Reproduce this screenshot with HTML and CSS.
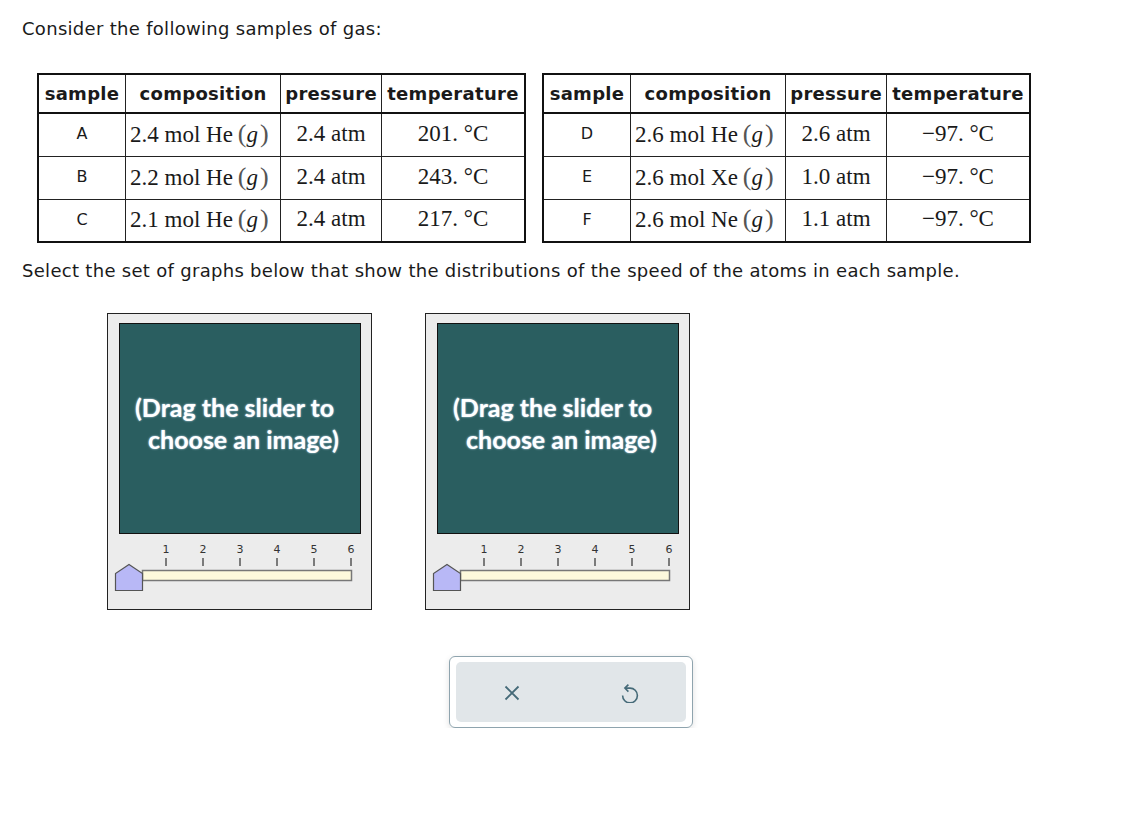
FILE: index.html
```html
<!DOCTYPE html>
<html lang="en">
<head>
    <meta charset="UTF-8">
    <title>Gas Samples</title>
    <link rel="stylesheet" href="styles.css">
</head>
<body>
    <div class="question">
        <p class="prompt">Consider the following samples of gas:</p>

        <div class="tables">
            <table class="samples">
                <tr>
                    <th class="c-sample">sample</th>
                    <th class="c-comp">composition</th>
                    <th class="c-press">pressure</th>
                    <th class="c-temp">temperature</th>
                </tr>
                <tr>
                    <td class="letter">A</td>
                    <td class="comp">2.4 mol He<span class="paren">(</span><i>g</i><span class="paren">)</span></td>
                    <td class="num">2.4 atm</td>
                    <td class="num">201. °C</td>
                </tr>
                <tr>
                    <td class="letter">B</td>
                    <td class="comp">2.2 mol He<span class="paren">(</span><i>g</i><span class="paren">)</span></td>
                    <td class="num">2.4 atm</td>
                    <td class="num">243. °C</td>
                </tr>
                <tr>
                    <td class="letter">C</td>
                    <td class="comp">2.1 mol He<span class="paren">(</span><i>g</i><span class="paren">)</span></td>
                    <td class="num">2.4 atm</td>
                    <td class="num">217. °C</td>
                </tr>
            </table>

            <table class="samples">
                <tr>
                    <th class="c-sample">sample</th>
                    <th class="c-comp">composition</th>
                    <th class="c-press">pressure</th>
                    <th class="c-temp">temperature</th>
                </tr>
                <tr>
                    <td class="letter">D</td>
                    <td class="comp">2.6 mol He<span class="paren">(</span><i>g</i><span class="paren">)</span></td>
                    <td class="num">2.6 atm</td>
                    <td class="num">−97. °C</td>
                </tr>
                <tr>
                    <td class="letter">E</td>
                    <td class="comp">2.6 mol Xe<span class="paren">(</span><i>g</i><span class="paren">)</span></td>
                    <td class="num">1.0 atm</td>
                    <td class="num">−97. °C</td>
                </tr>
                <tr>
                    <td class="letter">F</td>
                    <td class="comp">2.6 mol Ne<span class="paren">(</span><i>g</i><span class="paren">)</span></td>
                    <td class="num">1.1 atm</td>
                    <td class="num">−97. °C</td>
                </tr>
            </table>
        </div>

        <p class="prompt">Select the set of graphs below that show the distributions of the speed of the atoms in each sample.</p>

        <div class="pickers">
            <div class="picker">
                <div class="screen">
                    <span class="line">(Drag the slider to</span>
                    <span class="line indent">choose an image)</span>
                </div>
                <svg class="slider" width="264" height="70" viewBox="0 0 264 70">
                    <g class="marks">
                        <text x="58" y="19">1</text>
                        <text x="95" y="19">2</text>
                        <text x="132" y="19">3</text>
                        <text x="169" y="19">4</text>
                        <text x="206" y="19">5</text>
                        <text x="243" y="19">6</text>
                    </g>
                    <path d="M58 24v8M95 24v8M132 24v8M169 24v8M206 24v8M243 24v8" stroke="#555" stroke-width="1.5"/>
                    <rect x="34.5" y="36.5" width="209" height="10" fill="#fdf9dc" stroke="#777" stroke-width="1.5"/>
                    <path d="M7.5 56.5V39.5L21 30.5L34.5 39.5V56.5Z" fill="#b8b8f6" stroke="#555" stroke-width="1.2"/>
                </svg>
            </div>
            <div class="picker">
                <div class="screen">
                    <span class="line">(Drag the slider to</span>
                    <span class="line indent">choose an image)</span>
                </div>
                <svg class="slider" width="264" height="70" viewBox="0 0 264 70">
                    <g class="marks">
                        <text x="58" y="19">1</text>
                        <text x="95" y="19">2</text>
                        <text x="132" y="19">3</text>
                        <text x="169" y="19">4</text>
                        <text x="206" y="19">5</text>
                        <text x="243" y="19">6</text>
                    </g>
                    <path d="M58 24v8M95 24v8M132 24v8M169 24v8M206 24v8M243 24v8" stroke="#555" stroke-width="1.5"/>
                    <rect x="34.5" y="36.5" width="209" height="10" fill="#fdf9dc" stroke="#777" stroke-width="1.5"/>
                    <path d="M7.5 56.5V39.5L21 30.5L34.5 39.5V56.5Z" fill="#b8b8f6" stroke="#555" stroke-width="1.2"/>
                </svg>
            </div>
        </div>

        <div class="actions">
            <div class="actions-inner">
                <button class="icon-btn" aria-label="Clear">
                    <svg width="18" height="18" viewBox="0 0 18 18">
                        <path d="M2.5 2.5L15.5 15.5M15.5 2.5L2.5 15.5" stroke="#456a78" stroke-width="1.8" fill="none"/>
                    </svg>
                </button>
                <button class="icon-btn" aria-label="Undo">
                    <svg width="18" height="20" viewBox="0 0 18 20">
                        <path d="M1.6 12.5A7.4 7.4 0 1 0 9 5.1H4.2" stroke="#456a78" stroke-width="1.6" fill="none"/>
                        <path d="M7.4 1.6L3.9 5.1L7.4 8.6" stroke="#456a78" stroke-width="1.6" fill="none"/>
                    </svg>
                </button>
            </div>
        </div>
    </div>
</body>
</html>
```

FILE: styles.css
```css
/* Reset */
* {
    margin: 0;
    padding: 0;
    box-sizing: border-box;
}

body {
    font-family: 'DejaVu Sans', Verdana, sans-serif;
    background-color: #fff;
    color: #1a1a1a;
}

.question {
    padding: 17px 0 0 22px;
}

.prompt {
    font-size: 18px;
    letter-spacing: 0.3px;
    line-height: 24px;
}

/* Tables */
.tables {
    display: flex;
    gap: 16px;
    margin: 32px 0 0 15px;
}

.samples {
    border-collapse: collapse;
    border: 2px solid #111;
    width: 489px;
}

.samples th,
.samples td {
    border: 1px solid #222;
}

.samples th {
    font-size: 18px;
    letter-spacing: 0.3px;
    font-weight: bold;
    height: 39px;
    padding: 0 2px;
    text-align: center;
    border-bottom: 2px solid #111;
}

.samples td {
    height: 43px;
    font-family: 'Liberation Serif', 'Times New Roman', serif;
    font-size: 23px;
    text-align: center;
    padding-bottom: 2px;
}

.c-sample { width: 88px; }
.c-comp { width: 156px; }
.c-press { width: 101px; }
.c-temp { width: 144px; }

.samples td.letter {
    font-family: 'DejaVu Sans', Verdana, sans-serif;
    font-size: 16px;
}

.samples td.comp {
    text-align: left;
    padding-left: 4px;
    white-space: nowrap;
}

.paren {
    color: #555;
    font-size: 26px;
    margin-left: 5px;
}

.comp i + .paren {
    margin-left: 2px;
}

.tables + .prompt {
    margin-top: 16px;
}

/* Image pickers */
.pickers {
    display: flex;
    gap: 53px;
    margin: 30px 0 0 85px;
}

.picker {
    width: 265px;
    height: 297px;
    background: #ececec;
    border: 1px solid #222;
    padding-top: 9px;
}

.screen {
    width: 242px;
    height: 211px;
    margin-left: 11px;
    background: #2a5e60;
    border: 1px solid #111;
    display: flex;
    flex-direction: column;
    justify-content: center;
    padding: 0 0 12px 15px;
}

.screen .line {
    font-family: Lato, 'Open Sans', sans-serif;
    font-weight: bold;
    font-size: 25px;
    line-height: 32px;
    color: #fff;
    text-shadow: 0 0 2px #cfe6ff;
    white-space: nowrap;
}

.screen .indent {
    padding-left: 13px;
}

.slider {
    display: block;
}

.marks text {
    font-family: 'DejaVu Sans', Verdana, sans-serif;
    font-size: 11px;
    fill: #333;
    text-anchor: middle;
}

/* Action buttons */
.actions {
    margin: 46px 0 0 427px;
    width: 244px;
    height: 72px;
    border: 1px solid #8fa4ae;
    border-radius: 6px;
    padding: 5px 6px;
    box-shadow: 0 2px 6px rgba(0, 0, 0, 0.12);
}

.actions-inner {
    height: 100%;
    background: #e1e6e9;
    border-radius: 5px;
    display: flex;
    justify-content: space-between;
    align-items: center;
    padding: 0 36px 0 36px;
}

.icon-btn {
    background: none;
    border: none;
    width: 40px;
    height: 40px;
    display: flex;
    align-items: center;
    justify-content: center;
    padding-top: 2px;
}
```
